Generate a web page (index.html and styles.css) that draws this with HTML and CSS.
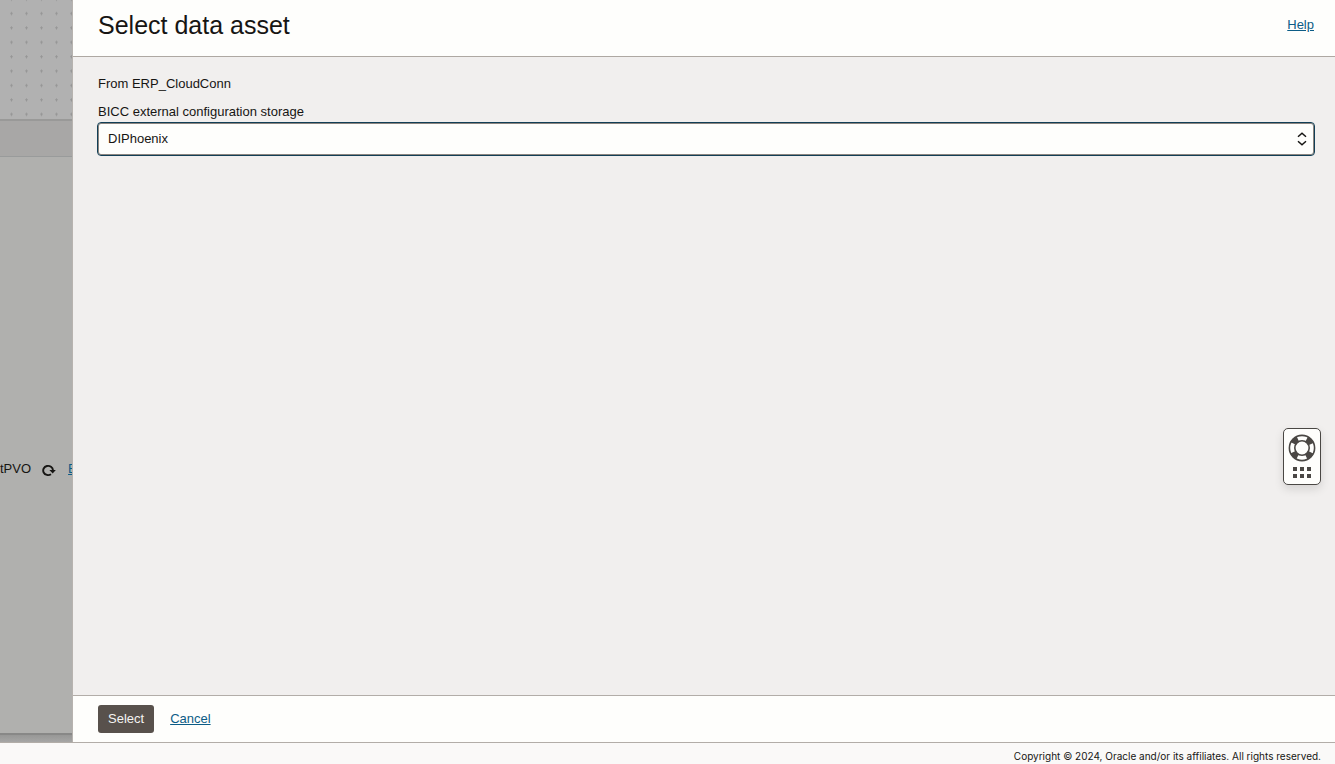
FILE: index.html
```html
<!DOCTYPE html>
<html lang="en">
<head>
    <meta charset="UTF-8">
    <meta name="viewport" content="width=device-width, initial-scale=1.0">
    <title>Select data asset</title>
    <link rel="stylesheet" href="styles.css">
</head>
<body>
    <div class="workspace">
        <!-- Dimmed designer behind the drawer -->
        <div class="backdrop">
            <div class="canvas">
                <svg width="100%" height="100%" aria-hidden="true">
                    <defs>
                        <pattern id="grid" x="4" y="6" width="15" height="14.4" patternUnits="userSpaceOnUse">
                            <path d="M6 7.5h3M7.5 6v3" stroke="#969696" stroke-width="1"/>
                        </pattern>
                    </defs>
                    <rect width="100%" height="100%" fill="url(#grid)"/>
                </svg>
            </div>
            <div class="toolbar"></div>
            <div class="properties">
                <div class="property-row">
                    <span>tPVO</span>
                    <button class="refresh" aria-label="Refresh">
                        <svg width="14" height="14" viewBox="0 0 14 14" fill="none">
                            <path d="M9 11.2A4.9 4.6 0 1 1 11 7.2" stroke="#161513" stroke-width="1.9"/>
                            <path d="M7.4 7h6.4l-3.1 3.6z" fill="#161513"/>
                        </svg>
                    </button>
                    <a href="#">E</a>
                </div>
            </div>
            <div class="backdrop-edge"></div>
        </div>

        <div class="drawer">
            <header class="drawer-header">
                <h1>Select data asset</h1>
                <a href="#">Help</a>
            </header>

            <main class="drawer-body">
                <p>From ERP_CloudConn</p>
                <label for="storage">BICC external configuration storage</label>
                <div class="select-box">
                    <select id="storage">
                        <option>DIPhoenix</option>
                    </select>
                    <svg class="select-arrows" width="10" height="14" viewBox="0 0 10 14" fill="none" stroke="#161513" stroke-width="1.5">
                        <path d="M1 4.7L5 1.2L9 4.7M1 9.3L5 12.8L9 9.3"/>
                    </svg>
                </div>
            </main>

            <div class="drawer-actions">
                <button class="select-button">Select</button>
                <a href="#">Cancel</a>
            </div>
        </div>
    </div>

    <footer class="copyright">Copyright © 2024, Oracle and/or its affiliates. All rights reserved.</footer>

    <!-- Floating help widget -->
    <button class="support" aria-label="Support">
        <svg width="28" height="28" viewBox="0 0 28 28" fill="none" stroke="#4a4744">
            <circle cx="14" cy="14" r="10" stroke-width="6" stroke-dasharray="6.6 9.108" stroke-dashoffset="-4.554"/>
            <circle cx="14" cy="14" r="12.6" stroke-width="1.6"/>
            <circle cx="14" cy="14" r="7.2" stroke-width="1.6"/>
        </svg>
        <svg width="18" height="12" viewBox="0 0 18 12" fill="#4a4744">
            <path d="M0 0h4v4H0zM7 0h4v4H7zM14 0h4v4h-4zM0 7h4v4H0zM7 7h4v4H7zM14 7h4v4h-4z"/>
        </svg>
    </button>
</body>
</html>
```
FILE: styles.css
```css
* {
    box-sizing: border-box;
}

body {
    margin: 0;
    height: 100vh;
    display: flex;
    flex-direction: column;
    overflow: hidden;
    font-family: "Liberation Sans", Arial, sans-serif;
    font-size: 13px;
    line-height: 16px;
    color: #161513;
    background-color: #faf9f8;
}

a {
    color: #0c5c86;
    text-underline-offset: 1px;
}

button {
    font: inherit;
    border: none;
    cursor: pointer;
}

.workspace {
    flex: 1;
    display: flex;
    min-height: 0;
}

/* Backdrop */
.backdrop {
    width: 72px;
    display: flex;
    flex-direction: column;
    overflow: hidden;
    background-color: #b0b0ae;
}

.canvas {
    height: 119px;
    background-color: #b1b1b1;
}

.canvas svg {
    display: block;
}

.toolbar {
    height: 38px;
    background-color: #a8a7a6;
    border-top: 2px solid #999998;
    border-bottom: 1px solid #999b9b;
}

.properties {
    flex: 1;
    padding-top: 304px;
}

.property-row {
    display: flex;
    align-items: center;
    width: max-content;
}

.refresh {
    display: flex;
    margin: 0 12px 0 11px;
    padding: 2px 0 0;
    background: none;
}

.backdrop-edge {
    height: 9px;
    border-top: 2px solid #888887;
    background: linear-gradient(#979796, #a6a6a5);
}

/* Drawer */
.drawer {
    flex: 1;
    display: flex;
    flex-direction: column;
    min-width: 0;
    background-color: #f1efee;
    border-left: 1px solid #b7b3af;
}

.drawer-header {
    display: flex;
    justify-content: space-between;
    align-items: center;
    height: 57px;
    padding: 0 21px 6px 25px;
    background-color: #fefefc;
    border-bottom: 1px solid #aea8a2;
}

.drawer-header h1 {
    margin: 0;
    font-size: 25px;
    line-height: 32px;
    font-weight: normal;
}

.drawer-body {
    flex: 1;
    padding: 19px 20px 0 24px;
}

.drawer-body p {
    margin: 0 0 12px 1px;
}

.drawer-body label {
    display: block;
    margin: 0 0 2px 1px;
}

.select-box {
    position: relative;
}

.select-box select {
    display: block;
    width: 100%;
    height: 34px;
    padding: 0 32px 0 10px;
    appearance: none;
    font: inherit;
    color: inherit;
    background-color: #fefefc;
    border: 1px solid #123f56;
    border-radius: 4px;
    box-shadow: inset 0 0 0 1px #8b8580;
    outline: none;
}

.select-arrows {
    position: absolute;
    top: 10px;
    right: 8px;
    pointer-events: none;
}

.drawer-actions {
    display: flex;
    align-items: center;
    gap: 16px;
    height: 47px;
    padding: 0 25px;
    background-color: #fefefc;
    border-top: 1px solid #b2ada8;
}

.select-button {
    height: 28px;
    padding: 0 10px;
    color: #f5f4f2;
    background-color: #58514c;
    border-radius: 3px;
}

/* Footer */
.copyright {
    height: 22px;
    padding: 5px 14px 0 0;
    border-top: 1px solid #b2ada8;
    font-family: Inter, sans-serif;
    font-size: 10px;
    text-align: right;
}

/* Support widget */
.support {
    position: fixed;
    right: 14px;
    bottom: 279px;
    display: flex;
    flex-direction: column;
    align-items: center;
    gap: 5px;
    width: 38px;
    height: 57px;
    padding: 5px 0 4px;
    background-color: #fefefc;
    border: 1px solid #4a4744;
    border-radius: 5px;
    box-shadow: 0 4px 10px rgba(0, 0, 0, 0.12);
}
```
